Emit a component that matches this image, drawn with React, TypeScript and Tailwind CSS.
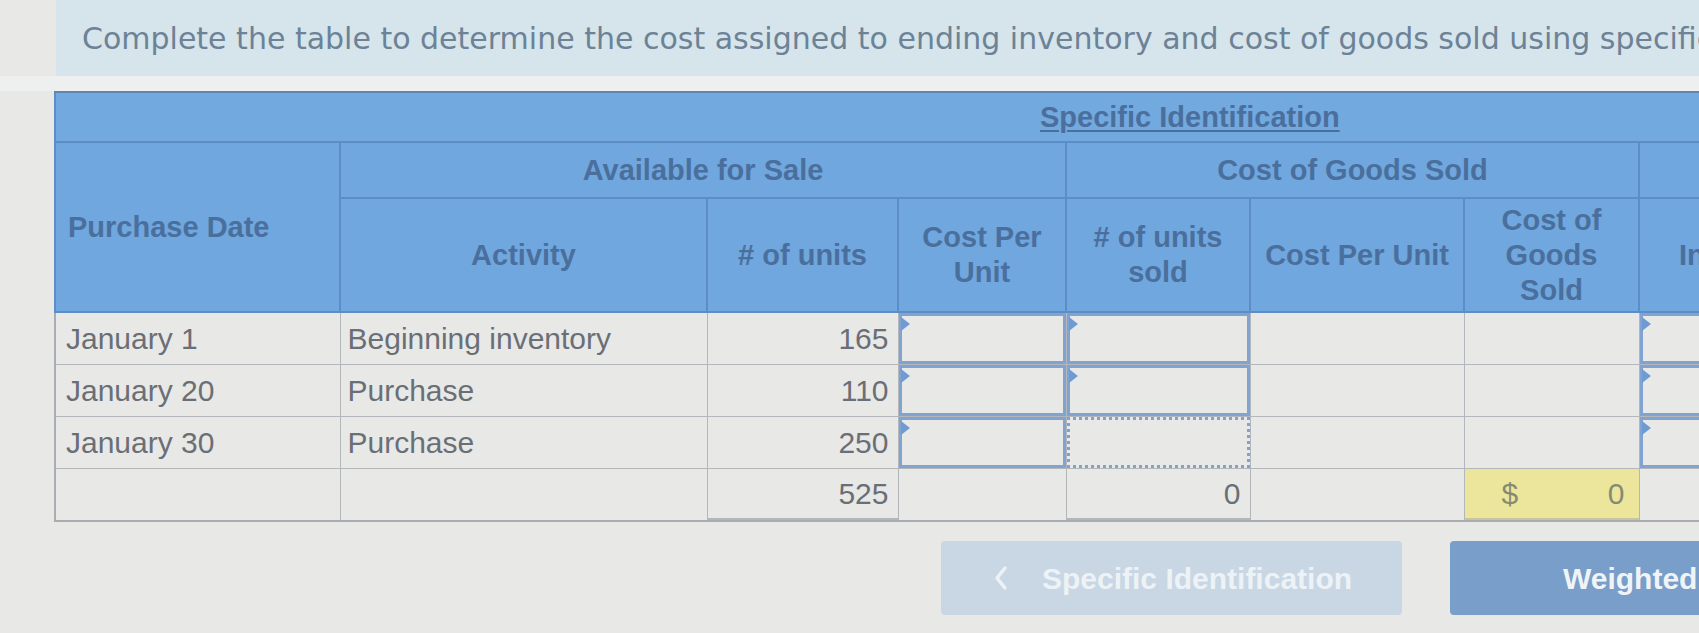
import React from "react";

const Flag = () => (
  <span className="absolute left-[-1px] top-[1px] h-0 w-0 border-y-[7px] border-l-[9px] border-y-transparent border-l-[#6f9bd4]" />
);

const InputCell = ({ dotted = false }: { dotted?: boolean }) => (
  <td className="p-0 h-[52px] border border-[#b3b6ba]">
    <div
      className={
        "relative h-[51px] w-full border-[3px] " +
        (dotted ? "border-dotted border-[#7fa2d0]" : "border-solid border-[#80a3d1]")
      }
    >
      {!dotted ? <Flag /> : null}
    </div>
  </td>
);

const H = "border-2 border-[#5d8dc6] text-[#4b6f9d] font-bold text-[29px] leading-[35px] text-center align-middle px-2";
const B = "border border-[#b3b6ba] h-[52px] text-[30px] text-[#6a6f76] align-middle";

const Total = ({ children }: { children: React.ReactNode }) => (
  <td className={B + " p-0"}>
    <div className="flex h-[51px] items-center justify-end border-b-2 border-[#b3b6ba] pr-[9px]">{children}</div>
  </td>
);

export default function App() {
  return (
    <div
      className="flex h-[633px] w-[1699px] flex-col overflow-hidden bg-[#e8e8e6]"
      style={{ fontFamily: '"Liberation Sans", Arial, sans-serif' }}
    >
      <div
        className="ml-[56px] flex h-[76px] shrink-0 items-center whitespace-nowrap bg-[#d5e5eb] pl-[26px] text-[30px] text-[#6d8296]"
        style={{ fontFamily: '"DejaVu Sans", Verdana, sans-serif' }}
      >
        Complete the table to determine the cost assigned to ending inventory and cost of goods sold using specific identification.
      </div>
      <div className="h-[15px] shrink-0 bg-[#eef0ef]" />
      <div className="ml-[54px] shrink-0">
        <table className="w-[2230px] table-fixed border-collapse border-2 border-[#a9adb2]">
          <colgroup>
            <col className="w-[285px]" />
            <col className="w-[367px]" />
            <col className="w-[191px]" />
            <col className="w-[168px]" />
            <col className="w-[184px]" />
            <col className="w-[214px]" />
            <col className="w-[175px]" />
            <col className="w-[200px]" />
            <col className="w-[220px]" />
            <col className="w-[226px]" />
          </colgroup>
          <thead>
            <tr className="h-[50px] bg-[#72a9df]">
              <td colSpan={10} className={H + " text-left pl-[984px] border-t-[#5f86b3]"}>
                <span className="underline decoration-2 underline-offset-[3px]">Specific Identification</span>
              </td>
            </tr>
            <tr className="h-[56px] bg-[#6fa7de]">
              <td rowSpan={2} className={H + " text-left pl-[12px]"}>
                Purchase Date
              </td>
              <td colSpan={3} className={H}>
                Available for Sale
              </td>
              <td colSpan={3} className={H}>
                Cost of Goods Sold
              </td>
              <td colSpan={3} className={H} />
            </tr>
            <tr className="h-[114px] bg-[#6fa7de]">
              <td className={H}>Activity</td>
              <td className={H}># of units</td>
              <td className={H}>
                Cost Per
                <br />
                Unit
              </td>
              <td className={H}>
                # of units
                <br />
                sold
              </td>
              <td className={H}>Cost Per Unit</td>
              <td className={H}>
                Cost of
                <br />
                Goods
                <br />
                Sold
              </td>
              <td className={H + " text-left pl-[39px] whitespace-nowrap overflow-hidden"}>In</td>
              <td className={H}>Cost Per Unit</td>
              <td className={H}>Ending Inventory</td>
            </tr>
          </thead>
          <tbody className="bg-[#e8e8e7]">
            {[
              ["January 1", "Beginning inventory", "165"],
              ["January 20", "Purchase", "110"],
              ["January 30", "Purchase", "250"],
            ].map((r, i) => (
              <tr key={i} className="h-[52px]">
                <td className={B + " pl-[10px]"}>{r[0]}</td>
                <td className={B + " pl-[7px]"}>{r[1]}</td>
                <td className={B + " pr-[9px] text-right"}>{r[2]}</td>
                <InputCell />
                <InputCell dotted={i === 2} />
                <td className={B} />
                <td className={B} />
                <InputCell />
                <td className={B} />
                <td className={B} />
              </tr>
            ))}
            <tr className="h-[52px]">
              <td className={B} />
              <td className={B} />
              <Total>525</Total>
              <td className={B} />
              <Total>0</Total>
              <td className={B} />
              <td className={B + " p-0"}>
                <div className="flex h-[51px] items-center justify-between border-b-2 border-[#c9c59a] bg-[#ece69d] pl-[37px] pr-[14px] text-[#878a72]">
                  <span>$</span>
                  <span>0</span>
                </div>
              </td>
              <td className={B} />
              <td className={B} />
              <td className={B} />
            </tr>
          </tbody>
        </table>
      </div>
      <div className="ml-[941px] mt-[19px] flex shrink-0 gap-[48px]">
        <div className="flex h-[74px] w-[461px] shrink-0 items-center rounded-[4px] bg-[#c8d7e3] pl-[50px] text-[30px] font-bold text-[#edf2f6]">
          <svg width="20" height="30" viewBox="0 0 20 30" className="mr-[31px]">
            <path d="M14 5 L6 15 L14 25" fill="none" stroke="#edf2f6" strokeWidth="3.5" strokeLinecap="round" strokeLinejoin="round" />
          </svg>
          <span>Specific Identification</span>
        </div>
        <div className="flex h-[74px] w-[461px] shrink-0 items-center whitespace-nowrap rounded-[4px] bg-[#789ec9] pl-[113px] text-[30px] font-bold text-[#f0f4f7]">
          Weighted Average
        </div>
      </div>
    </div>
  );
}
